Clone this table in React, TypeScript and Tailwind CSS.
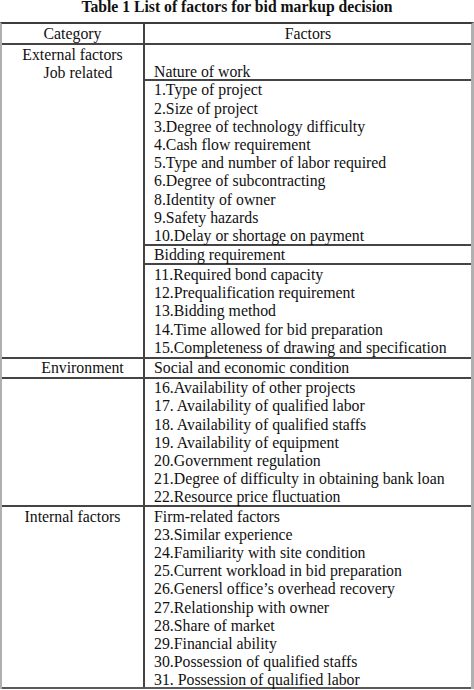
import React from "react";

const F = "[font-family:'Liberation_Serif','Times_New_Roman',serif]";

function Lines({ items, h }: { items: string[]; h: string }) {
  return (
    <div className={`flex flex-col pl-[9px] pt-[0.5px] ${h}`}>
      {items.map((t, i) => (
        <div key={i} className="leading-[18.2px] whitespace-pre">
          {t}
        </div>
      ))}
    </div>
  );
}

const list1 = [
  "1.Type of project",
  "2.Size of project",
  "3.Degree of technology difficulty",
  "4.Cash flow requirement",
  "5.Type and number of labor required",
  "6.Degree of subcontracting",
  "8.Identity of owner",
  "9.Safety hazards",
  "10.Delay or shortage on payment",
];
const list2 = [
  "11.Required bond capacity",
  "12.Prequalification requirement",
  "13.Bidding method",
  "14.Time allowed for bid preparation",
  "15.Completeness of drawing and specification",
];
const list3 = [
  "16.Availability of other projects",
  "17. Availability of qualified labor",
  "18. Availability of qualified staffs",
  "19. Availability of equipment",
  "20.Government regulation",
  "21.Degree of difficulty in obtaining bank loan",
  "22.Resource price fluctuation",
];
const list4 = [
  "Firm-related factors",
  "23.Similar experience",
  "24.Familiarity with site condition",
  "25.Current workload in bid preparation",
  "26.Genersl office\u2019s overhead recovery",
  "27.Relationship with owner",
  "28.Share of market",
  "29.Financial ability",
  "30.Possession of qualified staffs",
  "31. Possession of qualified labor",
];

export default function App() {
  return (
    <div className={`w-[474px] h-[690px] bg-white text-[#111] overflow-hidden ${F}`}>
      <div className="h-[22px] text-center font-bold text-[15.7px] leading-[13px] whitespace-nowrap">
        Table 1 List of factors for bid markup decision
      </div>
      <div className="border-t-2 border-t-[#3c3c3c] border-l-2 border-l-[#b0b0b0] border-r-[3px] border-r-[#b0b0b0] text-[15.8px]">
        {/* header */}
        <div className="flex border-b-2 border-[#444]">
          <div className="w-[141px] text-center h-[19px] leading-[19px]">Category</div>
          <div className="w-[2px] bg-[#444]" />
          <div className="flex-1 text-center h-[19px] leading-[19px]">Factors</div>
        </div>
        {/* external block */}
        <div className="flex border-b-2 border-[#444]">
          <div className="w-[141px] flex flex-col items-center pt-[0.5px]">
            <div className="leading-[18.2px]">External factors</div>
            <div className="leading-[18.2px] pl-[11px]">Job related</div>
          </div>
          <div className="w-[2px] bg-[#444]" />
          <div className="flex-1 flex flex-col">
            <div className="h-[35.8px] border-b-2 border-[#444] pl-[9px] flex flex-col pt-[0.5px]">
              <div className="leading-[18.2px]">&nbsp;</div>
              <div className="leading-[16.6px]">Nature of work</div>
            </div>
            <div className="border-b-2 border-[#444]">
              <Lines items={list1} h="h-[163.7px]" />
            </div>
            <div className="border-b-2 border-[#444] h-[19px] pl-[9px] leading-[18px]">
              Bidding requirement
            </div>
            <Lines items={list2} h="h-[91.7px]" />
          </div>
        </div>
        {/* environment */}
        <div className="flex border-b-2 border-[#444]">
          <div className="w-[141px] text-center h-[17.6px] leading-[18.4px] pl-[20px]">Environment</div>
          <div className="w-[2px] bg-[#444]" />
          <div className="flex-1 pl-[9px] h-[17.6px] leading-[18.4px]">Social and economic condition</div>
        </div>
        {/* environment list */}
        <div className="flex border-b-2 border-[#444]">
          <div className="w-[141px]" />
          <div className="w-[2px] bg-[#444]" />
          <div className="flex-1">
            <Lines items={list3} h="h-[126.4px]" />
          </div>
        </div>
        {/* internal */}
        <div className="flex border-b-2 border-[#5a5a5a]">
          <div className="w-[141px] text-center leading-[18.2px] pt-[0.5px]">Internal factors</div>
          <div className="w-[2px] bg-[#444]" />
          <div className="flex-1">
            <Lines items={list4} h="h-[179.8px]" />
          </div>
        </div>
      </div>
    </div>
  );
}
